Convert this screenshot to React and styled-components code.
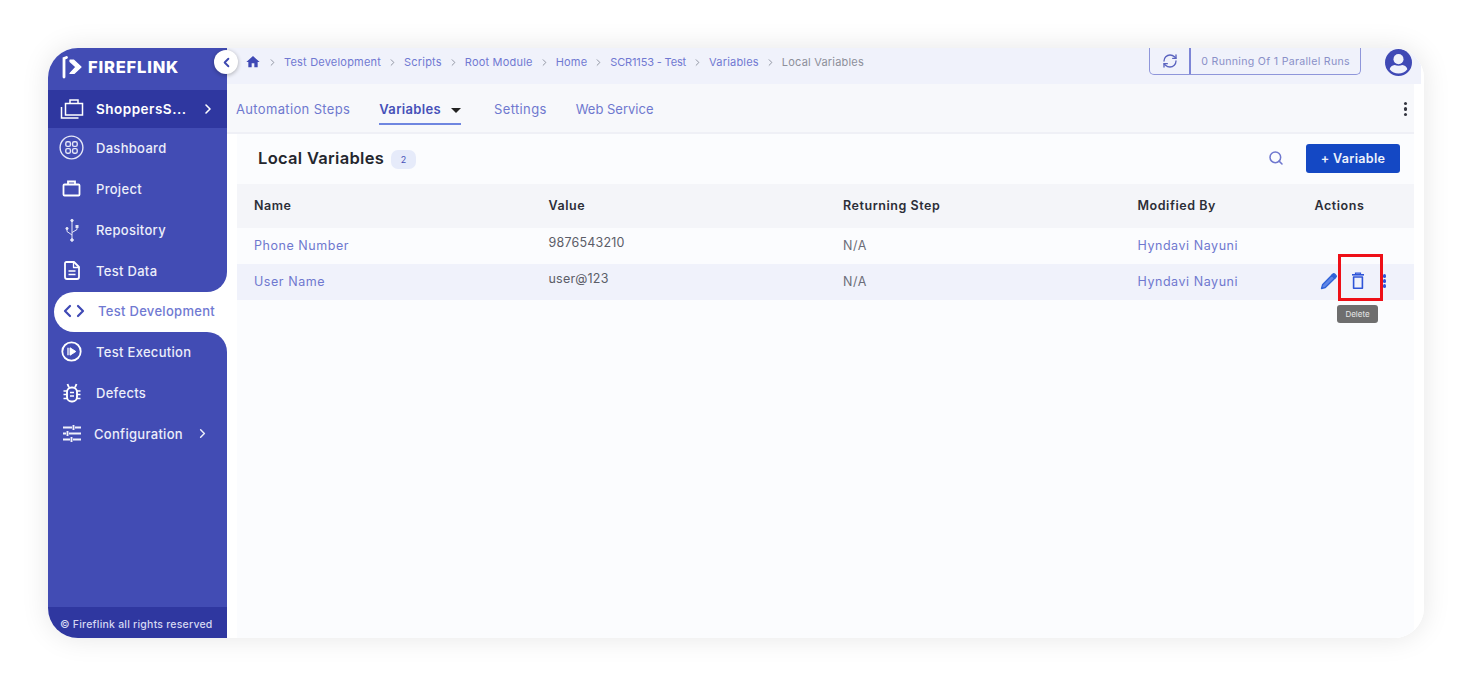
import React from "react";
import styled, { createGlobalStyle } from "styled-components";
import { ChevronLeft, ChevronRight, RefreshCw, Search } from "lucide-react";
import { MdHome } from "react-icons/md";

const GlobalStyle = createGlobalStyle`
  html, body { margin: 0; padding: 0; background: #fff; }
  body { font-family: Inter, "Open Sans", sans-serif; }
  * { box-sizing: border-box; }
`;

const Page = styled.div`
  width: 1472px;
  height: 686px;
  padding: 48px;
  overflow: hidden;
`;

const Card = styled.div`
  position: relative;
  display: flex;
  width: 1376px;
  height: 590px;
  border-radius: 30px;
  background: #fff;
  box-shadow: 0 0 28px rgba(0, 0, 0, 0.1);
  overflow: hidden;
`;

const Sidebar = styled.aside`
  display: flex;
  flex-direction: column;
  width: 179px;
  flex-shrink: 0;
  background: #fff;
  color: #fff;
`;

const LogoBar = styled.div`
  display: flex;
  align-items: center;
  gap: 3px;
  height: 42px;
  padding: 0 0 4px 13px;
  background: #424cb4;
`;

const LogoText = styled.span`
  font-size: 16.5px;
  font-weight: 800;
  letter-spacing: 0.8px;
`;

const ProjectRow = styled.div`
  display: flex;
  align-items: center;
  height: 38px;
  padding: 0 11px 0 12px;
  background: #2f37a0;
  font-size: 13.5px;
  font-weight: 600;
  letter-spacing: 0.5px;
`;

const ProjectName = styled.span`
  flex: 1;
  margin-left: 12px;
`;

const NavRow = styled.div`
  display: flex;
  align-items: center;
  height: 41px;
  padding: 0 0 2px 11px;
  background: #424cb4;
  font-size: 13px;
  font-weight: 500;
  letter-spacing: 0.3px;
  color: #eceefa;
  border-bottom-right-radius: ${({ $notchBelow }) => ($notchBelow ? "20px" : 0)};
  border-top-right-radius: ${({ $notchAbove }) => ($notchAbove ? "20px" : 0)};
`;

const ActiveShell = styled.div`
  height: 40px;
  padding-left: 6px;
  background: linear-gradient(90deg, #424cb4 50%, #fff 50%);
`;

const ActivePill = styled.div`
  display: flex;
  align-items: center;
  height: 100%;
  padding: 0 0 2px 7px;
  background: #fff;
  border-radius: 20px 0 0 20px;
  color: #7079d2;
  font-size: 13px;
  font-weight: 500;
  letter-spacing: 0.3px;
`;

const NavIcon = styled.span`
  display: flex;
  justify-content: center;
  width: 25px;
  margin-right: ${({ $gap }) => $gap ?? 12}px;
`;

const NavChevron = styled(ChevronRight)`
  margin-left: 12px;
`;

const Filler = styled.div`
  flex: 1;
  background: #424cb4;
`;

const SideFooter = styled.div`
  display: flex;
  align-items: center;
  height: 31px;
  padding: 3px 0 0 12px;
  background: #2f37a0;
  font-size: 10.5px;
  font-weight: 500;
  letter-spacing: 0.22px;
  color: #d6d9f2;
  white-space: nowrap;
`;

const CollapseButton = styled.button`
  position: absolute;
  left: 166px;
  top: 2px;
  display: flex;
  align-items: center;
  justify-content: center;
  width: 24px;
  height: 24px;
  padding: 0;
  border: 0;
  border-radius: 50%;
  background: #fff;
  color: #3f4ab0;
  box-shadow: 0 1px 4px rgba(0, 0, 0, 0.3);
`;

const Main = styled.main`
  display: flex;
  flex-direction: column;
  flex: 1;
  min-width: 0;
  background: #fff;
`;

const TopBar = styled.header`
  display: flex;
  align-items: center;
  height: 36px;
  margin-right: 3px;
  padding: 0 9px 8px 18px;
  background: #f0f2fb;
`;

const Crumbs = styled.nav`
  display: flex;
  align-items: center;
  flex: 1;
  font-size: 11px;
  letter-spacing: 0.2px;
  color: #7079d2;
`;

const HomeIcon = styled(MdHome)`
  color: #3f49b5;
`;

const Sep = styled(ChevronRight)`
  margin: 0 6px;
  color: #8a8f9c;
`;

const Crumb = styled.span`
  letter-spacing: ${({ $tight }) => ($tight ? "-0.15px" : "inherit")};
`;

const CurrentCrumb = styled.span`
  color: #8d8f9a;
`;

const RunBox = styled.div`
  display: flex;
  align-self: flex-start;
  align-items: center;
  height: 27px;
  margin-right: 24px;
  border: 1px solid #8f96da;
  border-top: 0;
  border-radius: 0 0 5px 5px;
  color: #8a90c8;
  font-size: 10.6px;
  letter-spacing: 0.3px;
`;

const RunIcon = styled.span`
  display: flex;
  align-items: center;
  justify-content: center;
  width: 41px;
  height: 100%;
  border-right: 2px solid #7d85d6;
  color: #5a63bf;
`;

const RunLabel = styled.span`
  padding: 0 10px;
  white-space: nowrap;
`;

const TabBar = styled.div`
  display: flex;
  align-items: center;
  height: 50px;
  margin-right: 10px;
  padding: 0 7px 0 9px;
  background: #f7f8fb;
  border-bottom: 2px solid #eff0f6;
  font-size: 13px;
  letter-spacing: 0.35px;
  color: #6f78cf;
`;

const Tab = styled.span`
  display: flex;
  align-items: center;
  gap: 9px;
  height: 27px;
  margin-right: ${({ $gap }) => $gap || 0}px;
  margin-top: 6px;
  padding-bottom: 3px;
  letter-spacing: ${({ $tight }) => ($tight ? "0" : "inherit")};
  font-weight: ${({ $active }) => ($active ? 600 : 400)};
  color: ${({ $active }) => ($active ? "#4650b8" : "#6f78cf")};
  border-bottom: 2px solid ${({ $active }) => ($active ? "#6f86e0" : "transparent")};
`;

const Caret = styled.i`
  width: 0;
  height: 0;
  margin-top: 3px;
  margin-left: 1px;
  border-left: 5px solid transparent;
  border-right: 5px solid transparent;
  border-top: 5px solid #222;
`;

const Dots = styled.div`
  display: flex;
  flex-direction: column;
  gap: 2px;
  margin: 2px 0 0 auto;
`;

const Dot = styled.i`
  width: ${({ $size }) => $size || 3.5}px;
  height: ${({ $size }) => $size || 3.5}px;
  border-radius: 50%;
  background: ${({ $color }) => $color || "#33353f"};
`;

const Content = styled.section`
  flex: 1;
  margin: 0 10px;
  background: #fbfcfe;
`;

const SectionHead = styled.div`
  display: flex;
  align-items: center;
  height: 50px;
  padding: 0 14px 2px 21px;
`;

const SectionTitle = styled.h2`
  margin: 0;
  font-size: 16.5px;
  font-weight: 600;
  letter-spacing: 0.3px;
  color: #24262e;
`;

const CountBadge = styled.span`
  display: flex;
  align-items: center;
  justify-content: center;
  width: 25px;
  height: 19px;
  margin: 3px auto 0 7px;
  border-radius: 7px;
  background: #e6ebfa;
  color: #4650b8;
  font-size: 9px;
`;

const AddButton = styled.button`
  width: 94px;
  height: 29px;
  margin-left: 22px;
  border: 0;
  border-radius: 3px;
  background: #1448c4;
  color: #eef1fb;
  font: 600 12.6px Inter, sans-serif;
  letter-spacing: 0.3px;
`;

const TableRow = styled.div`
  display: grid;
  grid-template-columns: 294.5px 294.5px 294.5px 177px 1fr;
  align-items: center;
  height: ${({ $head }) => ($head ? 44 : 36)}px;
  padding: 0 0 2px 17px;
  background: ${({ $bg }) => $bg || "transparent"};
  font-size: 12.5px;
  letter-spacing: 0.55px;
  color: ${({ $head }) => ($head ? "#2c2e38" : "#6f78cf")};
  font-weight: ${({ $head }) => ($head ? 600 : 400)};
`;

const ValueCell = styled.span`
  margin-top: -6px;
  letter-spacing: 0.2px;
  color: #5b5d68;
`;

const MutedCell = styled.span`
  color: #6b6d78;
`;

const Actions = styled.div`
  display: flex;
  align-items: center;
  gap: 13px;
  padding-left: 5px;
`;

const ActionDots = styled.div`
  display: flex;
  flex-direction: column;
  gap: 1.5px;
  margin-left: 5px;
`;

const Highlight = styled.div`
  position: absolute;
  left: 1290px;
  top: 206px;
  width: 45px;
  height: 47px;
  border: 3px solid #ee0f17;
`;

const Tooltip = styled.div`
  position: absolute;
  left: 1289px;
  top: 257px;
  display: flex;
  align-items: center;
  justify-content: center;
  width: 41px;
  height: 18px;
  border-radius: 3px;
  background: #6e6e6e;
  color: #e8e8e8;
  font-size: 8px;
`;

const LogoMark = () => (
  <svg width="24" height="26" viewBox="0 0 24 26" fill="none" stroke="#fff" strokeLinecap="round">
    <path d="M5.5 3.5 L3 4.5 V23" strokeWidth="2.8" />
    <path d="M9 6 H12.5 L20 13 L13 19.5 H9 L15 13 L9 7.5 Z" fill="#fff" strokeWidth="1.2" strokeLinejoin="round" />
  </svg>
);

const ProjectIcon = () => (
  <svg width="24" height="22" viewBox="0 0 24 22" fill="none" stroke="#fff" strokeWidth="1.5">
    <rect x="5.5" y="5.5" width="17" height="11.5" />
    <path d="M10 5.5 V2 H18 V5.5" />
    <path d="M1.5 9 V20 H18.5" />
  </svg>
);

const DashIcon = () => (
  <svg width="25" height="25" viewBox="0 0 25 25" fill="none" stroke="#e4e6f7" strokeWidth="1.4">
    <circle cx="12.5" cy="12.5" r="11.4" />
    <rect x="6.8" y="6.8" width="4.6" height="4.6" rx="1.4" />
    <rect x="13.6" y="6.8" width="4.6" height="4.6" rx="1.4" />
    <rect x="6.8" y="13.6" width="4.6" height="4.6" rx="1.4" />
    <rect x="13.6" y="13.6" width="4.6" height="4.6" rx="1.4" />
  </svg>
);

const BagIcon = () => (
  <svg width="19" height="17" viewBox="0 0 19 17" fill="none" stroke="#fff" strokeWidth="1.8">
    <rect x="1.5" y="4.5" width="16" height="11" rx="1" />
    <path d="M6 4.5 V1.5 H13 V4.5" />
  </svg>
);

const RepoIcon = () => (
  <svg width="16" height="24" viewBox="0 0 16 24" fill="none" stroke="#e4e6f7" strokeWidth="1">
    <path d="M8 2 V23" />
    <path d="M8 17 L3 13.5 V11" />
    <path d="M8 14.5 L13 11.5 V9" />
    <circle cx="8" cy="2.5" r="1.2" fill="#e4e6f7" />
    <circle cx="3" cy="10.5" r="1.1" fill="#e4e6f7" />
    <rect x="12" y="7.5" width="2" height="2" fill="#e4e6f7" />
    <circle cx="8" cy="22" r="1.3" fill="#e4e6f7" />
  </svg>
);

const FileIcon = () => (
  <svg width="16" height="19" viewBox="0 0 16 19" fill="none" stroke="#fff" strokeWidth="1.8" strokeLinejoin="round">
    <path d="M2.5 1 H10 L15 6 V16 Q15 18 13 18 H3 Q1 18 1 16 V2.5 Q1 1 2.5 1 Z" />
    <path d="M9.5 1 V6.5 H15" strokeWidth="1.3" />
    <path d="M4.5 10 H11.5 M4.5 13.5 H11.5" strokeWidth="1.5" />
  </svg>
);

const PlayIcon = () => (
  <svg width="21" height="21" viewBox="0 0 21 21" fill="none" stroke="#fff">
    <circle cx="10.5" cy="10.5" r="9.2" strokeWidth="1.8" />
    <path d="M7 6.8 V14.2" strokeWidth="1.3" />
    <path d="M9 6.8 L14.8 10.5 L9 14.2 Z" fill="#fff" strokeWidth="1" />
  </svg>
);

const BugIcon = () => (
  <svg width="18" height="20" viewBox="0 0 18 20" fill="none" stroke="#fff" strokeWidth="1.9">
    <rect x="4" y="4.5" width="10" height="14" rx="4.5" />
    <path d="M6 4.5 L4.5 1 M12 4.5 L13.5 1" />
    <path d="M0.5 8 H4 M17.5 8 H14 M0.5 11.5 H4 M17.5 11.5 H14 M0.5 15.5 H4.5 M17.5 15.5 H13.5" strokeWidth="1.6" />
    <path d="M7 9.5 H11 M7 13 H11" strokeWidth="1.7" />
  </svg>
);

const SlidersIcon = () => (
  <svg width="18" height="17" viewBox="0 0 18 17" fill="none" stroke="#f0f1fb" strokeWidth="1.9">
    <path d="M0 2.5 H9 M12 2.5 H18 M0 8.5 H3 M6 8.5 H18 M0 14.5 H7 M10 14.5 H18" />
    <path d="M10.5 0 V5 M4.5 6 V11 M8.5 12 V17" />
  </svg>
);

const CodeIcon = () => (
  <svg width="22" height="14" viewBox="0 0 22 14" fill="none" stroke="#3f49b5" strokeWidth="2.2" strokeLinecap="round" strokeLinejoin="round">
    <path d="M7 2 L2 7 L7 12" />
    <path d="M15 2 L20 7 L15 12" />
  </svg>
);

const AvatarIcon = () => (
  <svg width="27" height="27" viewBox="0 0 28 28">
    <circle cx="14" cy="14" r="14" fill="#3f49b5" />
    <circle cx="14" cy="10.5" r="5.2" fill="#f0f2fb" />
    <path d="M4.8 21 Q6 16.8 10 16.5 Q14 18 18 16.5 Q22 16.8 23.2 21 Q19.5 25.5 14 25.5 Q8.5 25.5 4.8 21 Z" fill="#f0f2fb" />
  </svg>
);

const PencilIcon = () => (
  <svg width="18" height="18" viewBox="0 0 18 18" fill="#5f86e6" stroke="#2f62d8" strokeWidth="1.3" strokeLinejoin="round">
    <path d="M1.5 16.5 L2.5 12.8 L11.8 3.2 L14.8 6.2 L5.3 15.5 Z" />
    <path d="M13 2 Q13.8 1.2 14.6 2 L16 3.4 Q16.8 4.2 16 5 L14.8 6.2 L11.8 3.2 Z" fill="#2f62d8" />
  </svg>
);

const TrashIcon = () => (
  <svg width="14" height="18" viewBox="0 0 14 18" fill="none" stroke="#2f55d8" strokeWidth="1.6">
    <path d="M2.6 5 H11.4 V16.2 H2.6 Z" strokeLinejoin="round" />
    <path d="M1 2.8 H13" />
    <path d="M4.5 2.5 V1.2 H9.5 V2.5" strokeWidth="1.2" />
  </svg>
);

const crumbs = [
  { label: "Test Development" },
  { label: "Scripts" },
  { label: "Root Module" },
  { label: "Home" },
  { label: "SCR1153 - Test", tight: true },
  { label: "Variables" },
];

const navBefore = [
  { label: "Dashboard", icon: <DashIcon /> },
  { label: "Project", icon: <BagIcon /> },
  { label: "Repository", icon: <RepoIcon /> },
  { label: "Test Data", icon: <FileIcon />, notchBelow: true },
];

const navAfter = [
  { label: "Test Execution", icon: <PlayIcon />, notchAbove: true },
  { label: "Defects", icon: <BugIcon /> },
];

const rows = [
  { name: "Phone Number", value: "9876543210" },
  { name: "User Name", value: "user@123", bg: "#f0f2fb", actions: true },
];

const NavItem = ({ item }) => (
  <NavRow $notchBelow={item.notchBelow} $notchAbove={item.notchAbove}>
    <NavIcon>{item.icon}</NavIcon>
    {item.label}
  </NavRow>
);

export default function App() {
  return (
    <Page>
      <GlobalStyle />
      <Card>
        <Sidebar>
          <LogoBar>
            <LogoMark />
            <LogoText>FIREFLINK</LogoText>
          </LogoBar>
          <ProjectRow>
            <ProjectIcon />
            <ProjectName>ShoppersS...</ProjectName>
            <ChevronRight size={16} strokeWidth={2.4} />
          </ProjectRow>
          {navBefore.map((item) => (
            <NavItem key={item.label} item={item} />
          ))}
          <ActiveShell>
            <ActivePill>
              <NavIcon $gap={12}>
                <CodeIcon />
              </NavIcon>
              Test Development
            </ActivePill>
          </ActiveShell>
          {navAfter.map((item) => (
            <NavItem key={item.label} item={item} />
          ))}
          <NavRow>
            <NavIcon $gap={10}>
              <SlidersIcon />
            </NavIcon>
            Configuration
            <NavChevron size={15} strokeWidth={2.4} />
          </NavRow>
          <Filler />
          <SideFooter>© Fireflink all rights reserved</SideFooter>
        </Sidebar>

        <CollapseButton>
          <ChevronLeft size={15} strokeWidth={3} />
        </CollapseButton>

        <Main>
          <TopBar>
            <Crumbs>
              <HomeIcon size={16} />
              {crumbs.map((c) => (
                <React.Fragment key={c.label}>
                  <Sep size={11} />
                  <Crumb $tight={c.tight}>{c.label}</Crumb>
                </React.Fragment>
              ))}
              <Sep size={11} />
              <CurrentCrumb>Local Variables</CurrentCrumb>
            </Crumbs>
            <RunBox>
              <RunIcon>
                <RefreshCw size={16} />
              </RunIcon>
              <RunLabel>0 Running Of 1 Parallel Runs</RunLabel>
            </RunBox>
            <AvatarIcon />
          </TopBar>

          <TabBar>
            <Tab $gap={29}>Automation Steps</Tab>
            <Tab $gap={33} $active>
              Variables
              <Caret />
            </Tab>
            <Tab $gap={29}>Settings</Tab>
            <Tab $tight>Web Service</Tab>
            <Dots>
              <Dot />
              <Dot />
              <Dot />
            </Dots>
          </TabBar>

          <Content>
            <SectionHead>
              <SectionTitle>Local Variables</SectionTitle>
              <CountBadge>2</CountBadge>
              <Search size={16} color="#6f78cf" strokeWidth={2.3} />
              <AddButton>+ Variable</AddButton>
            </SectionHead>
            <TableRow $head $bg="#f4f5f9">
              <span>Name</span>
              <span>Value</span>
              <span>Returning Step</span>
              <span>Modified By</span>
              <span>Actions</span>
            </TableRow>
            {rows.map((r) => (
              <TableRow key={r.name} $bg={r.bg}>
                <span>{r.name}</span>
                <ValueCell>{r.value}</ValueCell>
                <MutedCell>N/A</MutedCell>
                <span>Hyndavi Nayuni</span>
                {r.actions ? (
                  <Actions>
                    <PencilIcon />
                    <TrashIcon />
                    <ActionDots>
                      <Dot $size={3.5} $color="#2f55d8" />
                      <Dot $size={3.5} $color="#2f55d8" />
                      <Dot $size={3.5} $color="#2f55d8" />
                    </ActionDots>
                  </Actions>
                ) : (
                  <span />
                )}
              </TableRow>
            ))}
          </Content>
        </Main>

        <Highlight />
        <Tooltip>Delete</Tooltip>
      </Card>
    </Page>
  );
}
